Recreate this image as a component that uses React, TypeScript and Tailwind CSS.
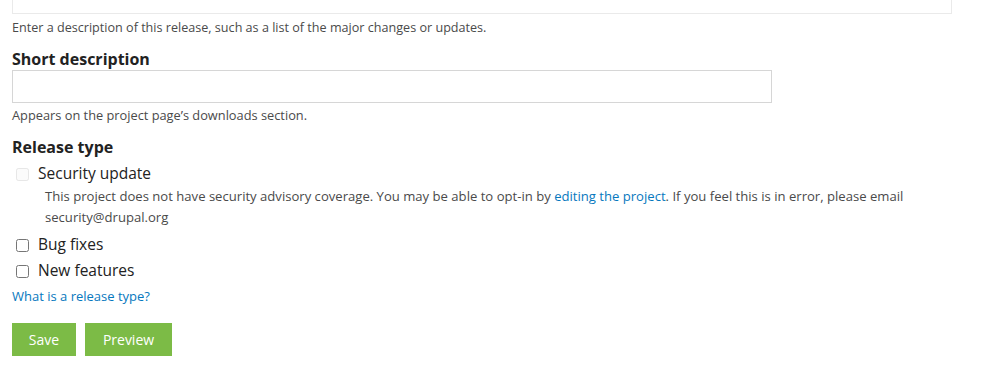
export default function App() {
  return (
    <div className="min-h-screen bg-white text-[#333] font-['Open_Sans',sans-serif]">
      <div className="px-3 -mt-[20px]">
        {/* Description textarea (scrolled off top) */}
        <div className="w-[940px] h-[34px] border border-[#eaeaea] bg-white" />
        <p className="mt-[4px] text-[12.6px] leading-[20px] text-[#4a4a4a]">
          Enter a description of this release, such as a list of the major changes or updates.
        </p>

        {/* Short description */}
        <label className="block mt-[10px] text-[16px] leading-[22px] font-bold text-[#222]">
          Short description
        </label>
        <input
          type="text"
          className="block mt-[0px] w-[760px] h-[33px] border border-[#d6d6d6] bg-white outline-none"
        />
        <p className="mt-[1px] text-[12.8px] leading-[22px] text-[#4a4a4a]">
          Appears on the project page’s downloads section.
        </p>

        {/* Release type */}
        <h3 className="mt-[10px] text-[16px] leading-[22px] font-bold text-[#222]">Release type</h3>
        <div className="mt-[5px]">
          <label className="flex items-center gap-[9px] pl-[4px] h-[22px]">
            <input type="checkbox" disabled className="w-[13px] h-[13px] m-0 opacity-50" />
            <span className="text-[15.5px] text-[#222]">Security update</span>
          </label>
          <p className="pl-[33px] pr-[60px] text-[13.1px] leading-[21px] text-[#4a4a4a] mt-[1px]">
            This project does not have security advisory coverage. You may be able to opt-in by{" "}
            <a href="#" className="text-[#0678be]">editing the project</a>. If you feel this is in error, please email
            security@drupal.org
          </p>
          <label className="flex items-center gap-[9px] pl-[4px] h-[26px] mt-[4px]">
            <input type="checkbox" className="w-[13px] h-[13px] m-0" />
            <span className="text-[15.5px] text-[#222]">Bug fixes</span>
          </label>
          <label className="flex items-center gap-[9px] pl-[4px] h-[26px]">
            <input type="checkbox" className="w-[13px] h-[13px] m-0" />
            <span className="text-[15.5px] text-[#222]">New features</span>
          </label>
        </div>
        <a href="#" className="block mt-[2px] text-[13px] leading-[20px] text-[#0678be]">
          What is a release type?
        </a>

        <div className="flex gap-[9px] mt-[17px]">
          <button className="w-[64px] h-[33px] bg-[#7cbb46] text-white text-[14px]">Save</button>
          <button className="w-[87px] h-[33px] bg-[#7cbb46] text-white text-[14px]">Preview</button>
        </div>
      </div>
    </div>
  );
}
